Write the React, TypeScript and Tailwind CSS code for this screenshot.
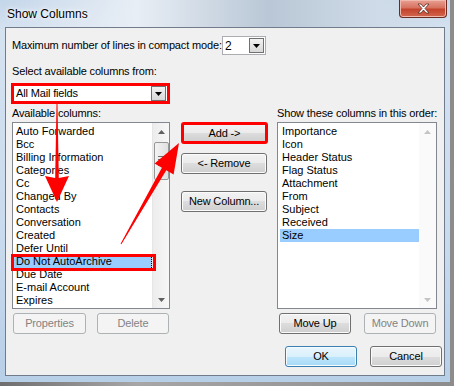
import type { ReactNode } from 'react'

const leftItems = [
  'Auto Forwarded',
  'Bcc',
  'Billing Information',
  'Categories',
  'Cc',
  'Changed By',
  'Contacts',
  'Conversation',
  'Created',
  'Defer Until',
  'Do Not AutoArchive',
  'Due Date',
  'E-mail Account',
  'Expires',
]

const rightItems = [
  'Importance',
  'Icon',
  'Header Status',
  'Flag Status',
  'Attachment',
  'From',
  'Subject',
  'Received',
  'Size',
]

type BtnProps = {
  children: ReactNode
  w: string
  disabled?: boolean
  primary?: boolean
  marked?: boolean
  className?: string
}

function Btn({ children, w, disabled, primary, marked, className = '' }: BtnProps) {
  let look =
    'border border-[#707070] bg-[linear-gradient(#f2f2f2_0%,#ebebeb_50%,#dddddd_50%,#cfcfcf_100%)] text-black shadow-[inset_0_0_0_1px_#fbfbfb]'
  if (disabled) look = 'border border-[#adb2b5] bg-[#f4f4f4] text-[#838383]'
  if (primary)
    look =
      'border border-[#3c7fb1] bg-[linear-gradient(#eaf6fd_0%,#d9f0fc_50%,#bee6fd_50%,#a7d9f5_100%)] text-black shadow-[inset_0_0_0_1px_#f6fbfe]'
  if (marked)
    look =
      'border-[3px] border-[#ff0000] bg-[linear-gradient(#f2f2f2_0%,#ebebeb_50%,#dddddd_50%,#cfcfcf_100%)] text-black'
  return (
    <div
      className={`${w} ${look} ${marked ? 'h-[22px]' : 'h-[21px]'} flex items-center justify-center rounded-[3px] leading-none ${className}`}
    >
      {children}
    </div>
  )
}

function DropArrow() {
  return (
    <div className="flex h-[15px] w-[15px] items-center justify-center border border-[#707070] bg-[linear-gradient(#f2f2f2,#d8d8d8)]">
      <svg width="7" height="4" viewBox="0 0 7 4">
        <path d="M0 0h7L3.5 4z" fill="#000" />
      </svg>
    </div>
  )
}

function ScrollArrow({ up, faint }: { up?: boolean; faint?: boolean }) {
  return (
    <div className="flex h-[17px] items-center justify-center">
      <svg width="7" height="4" viewBox="0 0 7 4">
        <path d={up ? 'M0 4h7L3.5 0z' : 'M0 0h7L3.5 4z'} fill={faint ? '#c4c4c4' : '#606060'} />
      </svg>
    </div>
  )
}

export default function App() {
  return (
    <div
      className="relative h-[386px] w-[454px] overflow-hidden bg-[linear-gradient(90deg,#6e6e6e,#a6a6a6_30%,#8c8c8c)] text-[11px] tracking-[-0.15px]"
      style={{ fontFamily: '"Liberation Sans", Arial, sans-serif' }}
    >
      <div className="relative flex h-[382px] w-[450px] flex-col bg-[linear-gradient(180deg,#c4d6ea_0%,#d5e2f0_8%,#c9dbee_60%,#b8cfe8_100%)] px-[5px] pb-[6px]">
        {/* title bar */}
        <div className="relative h-[27px] bg-[linear-gradient(90deg,transparent_0%,#e8eef5_30%,#b9c7d6_60%,#cfdbe8_85%,transparent_100%)]">
          <span className="absolute left-[2px] top-[5px] text-[12px] tracking-normal text-black [text-shadow:0_0_6px_#fff,0_0_3px_#fff]">
            Show Columns
          </span>
          <div className="absolute right-[-2px] top-0 flex h-[18px] w-[48px] items-center justify-center rounded-b-[4px] border border-t-0 border-[#6d2a20] bg-[linear-gradient(#e8a095_0%,#d7725f_45%,#c4432c_55%,#d2664d_100%)] shadow-[inset_0_0_0_1px_#f0b9ae]">
            <svg width="13" height="11" viewBox="0 0 13 11">
              <path
                d="M1 1h3l2.5 3 2.5-3h3L8 5.5 12 10H9L6.5 7 4 10H1l4-4.5z"
                fill="#fff"
                stroke="#5a2b25"
                strokeWidth="0.8"
              />
            </svg>
          </div>
        </div>

        {/* client area */}
        <div className="flex-1 border border-[#707c8c] bg-[#f0f0f0] pl-[6px] pt-[8px] text-black">
          <div className="flex h-[19px] items-center">
            <span className="w-[210px] whitespace-nowrap">Maximum number of lines in compact mode:</span>
            <div className="flex h-[19px] w-[44px] items-center justify-between border border-[#abadb3] bg-white pl-[2px] pr-[1px]">
              <span className="text-[12px] leading-none">2</span>
              <DropArrow />
            </div>
          </div>

          <div className="mt-[8px] h-[16px] leading-[16px]">Select available columns from:</div>

          <div className="-ml-px mt-[4px] flex h-[21px] w-[159px] items-center justify-between border-[3px] border-[#ff0000] bg-white pl-[2px] pr-[1px]">
            <span className="leading-none">All Mail fields</span>
            <DropArrow />
          </div>

          <div className="mt-[1px] flex">
            {/* left column */}
            <div className="w-[158px]">
              <div className="h-[17px] leading-[17px]">Available columns:</div>
              <div className="flex h-[187px] border border-[#828790] bg-white">
                <div className="flex-1 pt-[2px] tracking-normal">
                  {leftItems.map((t) => (
                    <div
                      key={t}
                      className={`ml-px h-[13px] pl-[2px] leading-[13px] ${t === 'Do Not AutoArchive' ? 'border-r border-dotted border-black bg-[#99ccff]' : ''}`}
                    >
                      {t}
                    </div>
                  ))}
                </div>
                <div className="flex w-[17px] flex-col border-l border-[#e6e6e6] bg-[linear-gradient(90deg,#ececec,#f7f7f7)]">
                  <ScrollArrow up />
                  <div className="mx-auto mt-[2px] flex h-[38px] w-[15px] flex-col items-center justify-center gap-[2px] rounded-[2px] border border-[#979797] bg-[linear-gradient(90deg,#f3f3f3,#e0e0e0)]">
                    <div className="h-px w-[7px] bg-[#6f6f6f]" />
                    <div className="h-px w-[7px] bg-[#6f6f6f]" />
                    <div className="h-px w-[7px] bg-[#6f6f6f]" />
                    <div className="h-px w-[7px] bg-[#6f6f6f]" />
                  </div>
                  <div className="flex-1" />
                  <ScrollArrow />
                </div>
              </div>
              <div className="ml-px mt-[4px] flex gap-[11px]">
                <Btn w="w-[73px]" disabled>
                  Properties
                </Btn>
                <Btn w="w-[72px]" disabled>
                  Delete
                </Btn>
              </div>
            </div>

            {/* middle column */}
            <div className="ml-[11px] flex w-[87px] flex-col pt-[17px]">
              <Btn w="w-[87px]" marked>
                Add -&gt;
              </Btn>
              <Btn w="w-[86px]" className="mt-[9px]">
                &lt;- Remove
              </Btn>
              <Btn w="w-[86px]" className="mt-[17px]">
                New Column...
              </Btn>
            </div>

            {/* right column */}
            <div className="ml-[9px] w-[160px]">
              <div className="h-[17px] whitespace-nowrap leading-[17px]">Show these columns in this order:</div>
              <div className="flex h-[187px] border border-[#828790] bg-white">
                <div className="flex-1 pt-[2px] tracking-normal">
                  {rightItems.map((t) => (
                    <div
                      key={t}
                      className={`ml-[2px] h-[13px] pl-[2px] leading-[13px] ${t === 'Size' ? 'bg-[#99ccff]' : ''}`}
                    >
                      {t}
                    </div>
                  ))}
                </div>
                <div className="flex w-[17px] flex-col bg-[#fafafa]">
                  <ScrollArrow up faint />
                  <div className="flex-1" />
                  <ScrollArrow faint />
                </div>
              </div>
              <div className="ml-[2px] mt-[4px] flex gap-[13px]">
                <Btn w="w-[72px]">Move Up</Btn>
                <Btn w="w-[72px]" disabled>
                  Move Down
                </Btn>
              </div>
            </div>
          </div>

          <div className="mt-[12px] flex gap-[13px] pl-[273px]">
            <Btn w="w-[72px]" primary>
              OK
            </Btn>
            <Btn w="w-[72px]">Cancel</Btn>
          </div>
        </div>
      </div>

      {/* red annotations */}
      <svg className="pointer-events-none absolute left-0 top-0" width="454" height="386">
        <rect x="12.5" y="255.5" width="142" height="14" fill="none" stroke="#ff0000" strokeWidth="3" />
        <polygon points="56.5,104 57.5,104 58.8,178 69,176 57,202 45,176 55.2,178" fill="#ff0000" />
        <polygon
          points="121.4,244.2 166.3,170.2 173.6,174.5 179,143 154.6,163.5 161.9,167.8 120.6,243.8"
          fill="#ff0000"
        />
      </svg>
    </div>
  )
}
